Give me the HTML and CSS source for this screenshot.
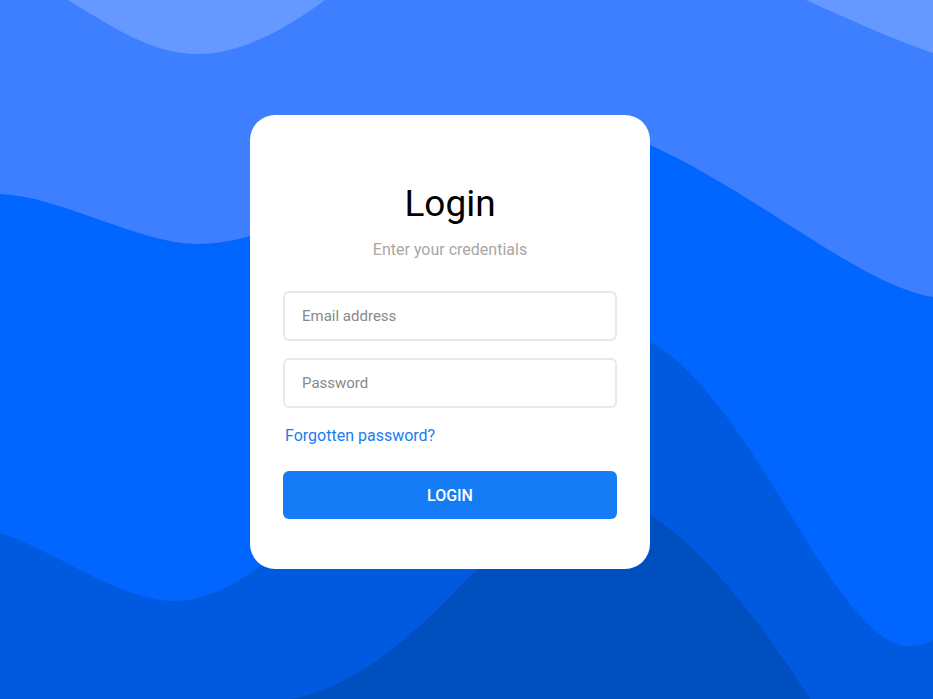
FILE: index.html
```html
<!DOCTYPE html>
<html>
<head>
	<meta charset="UTF-8">
	<title>Login</title>
	<link rel="stylesheet" href="styles.css">
</head>
<body>
	<svg class="waves" viewBox="0 0 933 699" preserveAspectRatio="none">
		<rect width="933" height="699" fill="#3d7fff" />
		<path fill="#6699ff" d="M68 0 C120 32 155 54 198 54 C240 54 285 30 325 0 Z" />
		<path fill="#6699ff" d="M806 0 C850 20 890 38 933 53 L933 0 Z" />
		<path fill="#0066ff" d="M0 194 C60 196 140 244 197 244 C300 244 380 150 500 140 C580 134 620 134 650 145 C760 195 860 285 933 297 L933 699 L0 699 Z" />
		<path fill="#005ae0" d="M0 533 C50 548 120 601 175 601 C300 601 450 320 560 320 C600 320 630 332 650 342 C685 360 720 405 750 450 C800 525 860 646 908 646 C920 646 928 643 933 640 L933 699 L0 699 Z" />
		<path fill="#004fbf" d="M290 699 C350 690 410 640 466 580 C520 530 560 500 600 500 C620 500 640 508 650 515 C700 545 760 620 810 699 Z" />
	</svg>
	<div class="page">
		<form class="card">
			<h1 class="title">Login</h1>
			<p class="subtitle">Enter your credentials</p>
			<input class="field" type="email" placeholder="Email address" autofocus />
			<input class="field" type="password" placeholder="Password" />
			<a class="forgot" href="#">Forgotten password?</a>
			<button class="loginBtn" type="button">LOGIN</button>
		</form>
	</div>
</body>
</html>
```

FILE: styles.css
```css
html, body {
	margin: 0;
	padding: 0;
	height: 100%;
	overflow: hidden;
}
body {
	font-family: Roboto, "Liberation Sans", sans-serif;
	background-color: #3d7fff;
}
.waves {
	position: fixed;
	top: 0;
	left: 0;
	width: 100%;
	height: 100%;
	z-index: 0;
}
.page {
	position: relative;
	z-index: 1;
	padding: 115px 0 0 250px;
}
.card {
	box-sizing: border-box;
	width: 400px;
	height: 454px;
	background-color: #fff;
	border-radius: 25px;
	padding: 66px 33px 50px;
	display: flex;
	flex-direction: column;
}
.title {
	margin: 0;
	font-size: 37px;
	font-weight: 400;
	line-height: 46px;
	text-align: center;
	color: #000;
}
.subtitle {
	margin: 13px 0 0;
	font-size: 16px;
	line-height: 20px;
	text-align: center;
	color: #aaa6a4;
}
.field {
	box-sizing: border-box;
	height: 50px;
	width: 100%;
	margin: 31px 0 0;
	padding: 0 17px;
	border: 2px solid #e8e8e8;
	border-radius: 6px;
	font-family: inherit;
	font-size: 15px;
	color: #333;
	background-color: #fff;
}
.field + .field {
	margin-top: 17px;
}
.field::placeholder {
	color: #888;
}
.field:focus {
	outline: none;
}
.forgot {
	margin: 18px 0 0 2px;
	font-size: 16px;
	line-height: 20px;
	color: #1a7cf2;
	text-decoration: none;
	align-self: flex-start;
}
.loginBtn {
	margin-top: 25px;
	height: 48px;
	width: 100%;
	border: none;
	border-radius: 6px;
	background-color: #167cf5;
	color: #fff;
	font-family: inherit;
	font-size: 16px;
	font-weight: 500;
}
```
